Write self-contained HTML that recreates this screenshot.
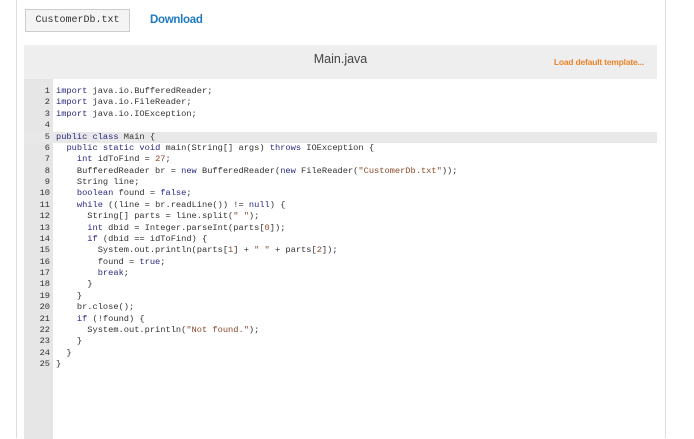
<!DOCTYPE html>
<html><head><style>
body{margin:0;width:694px;height:432px;background:#fff;position:relative;overflow:hidden;font-family:"Liberation Sans",sans-serif}
.card{position:absolute;left:16px;top:-2px;width:648px;height:440px;border-left:1px solid #ddd;border-right:1px solid #ddd;background:#fff}
.btn{position:absolute;left:25px;top:9px;width:103px;height:21px;background:#f4f4f4;border:1px solid #ccc;font:10px "Liberation Mono",monospace;color:#333;line-height:21px;text-align:center}
.dl{position:absolute;left:150px;top:14px;font-size:11.5px;font-weight:bold;color:#1f7ac0;letter-spacing:-0.3px}
.panel{position:absolute;left:24px;top:45px;width:633px;height:390px;background:#fff}
.hdr{position:absolute;left:0;top:0;width:633px;height:34px;background:#eee}
.title{position:absolute;left:0;width:633px;top:7px;text-align:center;font-size:12.5px;color:#444}
.load{position:absolute;right:13px;top:12px;font-size:8.5px;font-weight:bold;color:#e8852a;letter-spacing:-0.2px}
.gut{position:absolute;left:0;top:34px;width:29px;height:360px;background:#e6e6e6}
.code{position:absolute;left:0;top:86px;width:633px;font:8.7px/11.38px "Liberation Mono",monospace;color:#333}
.l{position:relative;height:11.38px;white-space:pre}
.n{position:absolute;left:0;width:26px;text-align:right;color:#333}
.t{position:absolute;left:32px}
.hl{background:#e8e8e8}
.k{color:#2a2a80}.s{color:#8a4a2a}.m{color:#8a4a2a}
</style></head><body>
<div class="card"></div>
<div class="btn">CustomerDb.txt</div>
<div class="dl">Download</div>
<div class="panel">
<div class="hdr"><div class="title">Main.java</div><div class="load">Load default template...</div></div>
<div class="gut"></div>
</div>
<div class="code" style="left:24px">
<div class="l"><span class="n">1</span><span class="t"><span class="k">import</span> java.io.BufferedReader;</span></div>
<div class="l"><span class="n">2</span><span class="t"><span class="k">import</span> java.io.FileReader;</span></div>
<div class="l"><span class="n">3</span><span class="t"><span class="k">import</span> java.io.IOException;</span></div>
<div class="l"><span class="n">4</span><span class="t"></span></div>
<div class="l hl"><span class="n">5</span><span class="t"><span class="k">public class</span> Main {</span></div>
<div class="l"><span class="n">6</span><span class="t">  <span class="k">public static void</span> main(String[] args) <span class="k">throws</span> IOException {</span></div>
<div class="l"><span class="n">7</span><span class="t">    <span class="k">int</span> idToFind = <span class="m">27</span>;</span></div>
<div class="l"><span class="n">8</span><span class="t">    BufferedReader br = <span class="k">new</span> BufferedReader(<span class="k">new</span> FileReader(<span class="s">"CustomerDb.txt"</span>));</span></div>
<div class="l"><span class="n">9</span><span class="t">    String line;</span></div>
<div class="l"><span class="n">10</span><span class="t">    <span class="k">boolean</span> found = <span class="k">false</span>;</span></div>
<div class="l"><span class="n">11</span><span class="t">    <span class="k">while</span> ((line = br.readLine()) != <span class="k">null</span>) {</span></div>
<div class="l"><span class="n">12</span><span class="t">      String[] parts = line.split(<span class="s">" "</span>);</span></div>
<div class="l"><span class="n">13</span><span class="t">      <span class="k">int</span> dbid = Integer.parseInt(parts[<span class="m">0</span>]);</span></div>
<div class="l"><span class="n">14</span><span class="t">      <span class="k">if</span> (dbid == idToFind) {</span></div>
<div class="l"><span class="n">15</span><span class="t">        System.out.println(parts[<span class="m">1</span>] + <span class="s">" "</span> + parts[<span class="m">2</span>]);</span></div>
<div class="l"><span class="n">16</span><span class="t">        found = <span class="k">true</span>;</span></div>
<div class="l"><span class="n">17</span><span class="t">        <span class="k">break</span>;</span></div>
<div class="l"><span class="n">18</span><span class="t">      }</span></div>
<div class="l"><span class="n">19</span><span class="t">    }</span></div>
<div class="l"><span class="n">20</span><span class="t">    br.close();</span></div>
<div class="l"><span class="n">21</span><span class="t">    <span class="k">if</span> (!found) {</span></div>
<div class="l"><span class="n">22</span><span class="t">      System.out.println(<span class="s">"Not found."</span>);</span></div>
<div class="l"><span class="n">23</span><span class="t">    }</span></div>
<div class="l"><span class="n">24</span><span class="t">  }</span></div>
<div class="l"><span class="n">25</span><span class="t">}</span></div>
</div>
</body></html>
